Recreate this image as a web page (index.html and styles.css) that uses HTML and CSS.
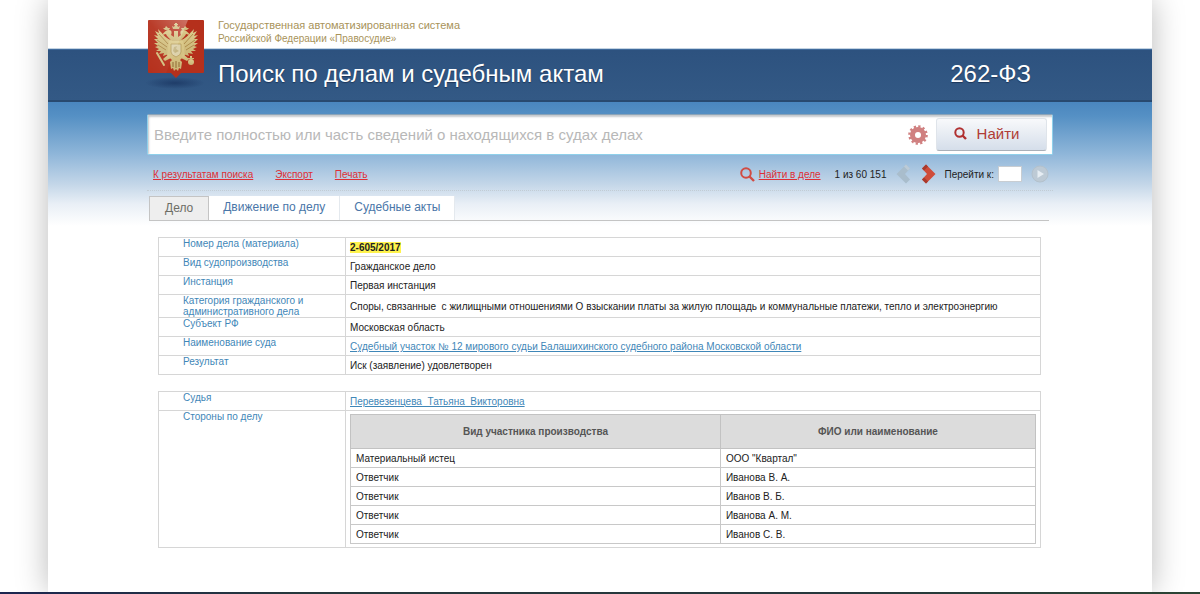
FILE: index.html
```html
<!DOCTYPE html>
<html lang="ru">
<head>
    <meta charset="UTF-8">
    <meta name="viewport" content="width=device-width, initial-scale=1.0">
    <title>ГАС «Правосудие»</title>
    <link rel="stylesheet" href="styles.css">
</head>
<body>
    <div class="page">
        <header class="header">
            <div class="top">
                <div class="inner top-inner">
                    <svg class="emblem" viewBox="0 0 64 72" width="64" height="72" aria-hidden="true">
                        <defs>
                            <linearGradient id="gold" x1="0" y1="0" x2="0" y2="1">
                                <stop offset="0" stop-color="#dccb8c"/>
                                <stop offset="1" stop-color="#cbb576"/>
                            </linearGradient>
                            <linearGradient id="shine" x1="1" y1="0" x2="0" y2="1">
                                <stop offset="0" stop-color="#fff" stop-opacity="0.8"/>
                                <stop offset="0.5" stop-color="#fff" stop-opacity="0.15"/>
                                <stop offset="1" stop-color="#fff" stop-opacity="0"/>
                            </linearGradient>
                            <radialGradient id="shadow">
                                <stop offset="0" stop-color="#1d3a66" stop-opacity="0.9"/>
                                <stop offset="1" stop-color="#1d3a66" stop-opacity="0"/>
                            </radialGradient>
                        </defs>
                        <ellipse cx="31" cy="63" rx="30" ry="6" fill="url(#shadow)"/>
                        <path d="M5 0H59Q60 0 60 1V52Q60 53 59 53H37L32 58L27 53H5Q4 53 4 52V1Q4 0 5 0Z" fill="#b5301c"/>
                        <g fill="url(#gold)">
                            <!-- crowns -->
                            <path d="M29 9L28 6L30 7L31 5H30V4H31V3H33V4H34V5H33L34 7L36 6L35 9Z"/>
                            <path d="M21 10L19 8L21 8L22 6L24 8L26 8L25 10ZM38 10L37 8L40 8L41 6L43 8L45 8L43 10Z"/>
                            <!-- heads -->
                            <path d="M25 10C22 10 20 12 18 15L22 14C23 17 26 18 28 22L36 22C38 18 41 17 42 14L46 15C44 12 42 10 39 10C36 10 36 13 37 15L34 17V11H30V17L27 15C28 13 28 10 25 10Z"/>
                            <!-- wings -->
                            <path d="M28 20C23 20 19 14 14 9L15 13L11 11L14 16L10 15L14 19L10 19L14 23L10 23L14 26L11 27L15 29L12 31L17 31L15 34L20 33L19 36L25 34Z"/>
                            <path d="M36 20C41 20 45 14 50 9L49 13L53 11L50 16L54 15L50 19L54 19L50 23L54 23L50 26L53 27L49 29L52 31L47 31L49 34L44 33L45 36L39 34Z"/>
                            <!-- body, legs and tail -->
                            <path d="M25 21H39L41 35L36 40L38 42L37 49L35 48L34 51L32 49L30 51L29 48L27 49L26 42L28 40L23 35Z"/>
                            <path d="M25 34L19 39L21 41L27 38ZM39 34L45 39L43 41L37 38Z"/>
                            <circle cx="47" cy="42" r="3"/>
                            <path d="M46 36H48V38H50V39H44V38H46Z"/>
                        </g>
                        <path d="M13 33L20 45" stroke="#d4c180" stroke-width="2" stroke-linecap="round"/>
                        <path d="M15 14L24 24M13 20L23 27M14 25L22 30M49 14L40 24M51 20L41 27M50 25L42 30" stroke="#a5803f" stroke-width="0.8"/>
                        <path d="M27 24H37V32Q37 35 32 37Q27 35 27 32Z" fill="#ddd2ac" stroke="#b59c5c" stroke-width="0.8"/>
                        <path d="M30 27L33 26L32 29L35 31L31 33L29 31Z" fill="#c4b583"/>
                        <path d="M29 42V47M32 41V48M35 42V47" stroke="#8f6a35" stroke-width="1"/>
                        <path d="M5 0H44L22 53H5Q4 53 4 52V1Q4 0 5 0Z" fill="url(#shine)" opacity="0.4"/>
                    </svg>
                    <div class="org">
                        <div class="org-name">Государственная автоматизированная система</div>
                        <div class="org-sub">Российской Федерации «Правосудие»</div>
                    </div>
                </div>
            </div>
            <div class="title-bar">
                <div class="inner title-inner">
                    <h1 class="title">Поиск по делам и судебным актам</h1>
                    <div class="law">262-ФЗ</div>
                </div>
            </div>
        </header>

        <main class="main">
            <div class="inner">
                <form class="search">
                    <input class="search-input" type="text" aria-label="Поиск" placeholder="Введите полностью или часть сведений о находящихся в судах делах">
                    <button class="icon-btn" type="button" aria-label="Настройки">
                        <svg viewBox="0 0 20 20" width="20" height="20">
                            <circle cx="10" cy="10" r="5.5" fill="none" stroke="#d08080" stroke-width="5"/>
                            <circle cx="10" cy="10" r="8.6" fill="none" stroke="#d08080" stroke-width="2.4" stroke-dasharray="2.25 2.25"/>
                        </svg>
                    </button>
                    <button class="search-btn" type="submit">
                        <svg viewBox="0 0 13 13" width="13" height="13">
                            <circle cx="5.5" cy="5.5" r="4.2" fill="none" stroke="#b03030" stroke-width="2"/>
                            <path d="M8.5 8.5L12 12" stroke="#b03030" stroke-width="2.4"/>
                        </svg>
                        <span>Найти</span>
                    </button>
                </form>

                <div class="toolbar">
                    <div class="links">
                        <a href="#">К результатам поиска</a>
                        <a href="#">Экспорт</a>
                        <a href="#">Печать</a>
                    </div>
                    <div class="pager">
                        <a class="find" href="#">
                            <svg viewBox="0 0 15 15" width="15" height="15">
                                <circle cx="6" cy="6" r="4.8" fill="none" stroke="#d14b42" stroke-width="2"/>
                                <path d="M9.5 9.5L14 14" stroke="#d14b42" stroke-width="2.4"/>
                            </svg>
                            <span>Найти в деле</span>
                        </a>
                        <span class="count">1 из 60 151</span>
                        <button class="icon-btn" type="button" aria-label="Назад">
                            <svg viewBox="0 0 15 20" width="15" height="20">
                                <path d="M10 0.5L14 4.5L9 10L14 15.5L10 19.5L0.5 10Z" fill="#a9bdcc"/>
                                <path d="M10 0.5L14 4.5L12 6.5L8 2.5Z" fill="#bccbd7"/>
                            </svg>
                        </button>
                        <button class="icon-btn next" type="button" aria-label="Вперед">
                            <svg viewBox="0 0 15 20" width="15" height="20">
                                <path d="M5 0.5L14.5 10L5 19.5L1 15.5L6 10L1 4.5Z" fill="#cf4c3a"/>
                                <path d="M5 0.5L7 2.5L3 6.5L1 4.5ZM1 15.5L3 13.5L7 17.5L5 19.5Z" fill="#a83a2c"/>
                            </svg>
                        </button>
                        <label class="goto-label" for="goto">Перейти к:</label>
                        <input class="goto" id="goto" type="text">
                        <button class="icon-btn" type="button" aria-label="Перейти">
                            <svg viewBox="0 0 18 18" width="18" height="18">
                                <circle cx="9" cy="9" r="8" fill="#bdcad5" stroke="#b3c1cc" stroke-width="1"/>
                                <path d="M6.5 5L13 9L6.5 13Z" fill="#e6edf3"/>
                            </svg>
                        </button>
                    </div>
                </div>

                <nav class="tabs">
                    <a class="tab active" href="#">Дело</a>
                    <a class="tab" href="#">Движение по делу</a>
                    <a class="tab" href="#">Судебные акты</a>
                </nav>

                <div class="content">
                    <table class="card">
                        <tr>
                            <th scope="row">Номер дела (материала)</th>
                            <td><mark>2-605/2017</mark></td>
                        </tr>
                        <tr>
                            <th scope="row">Вид судопроизводства</th>
                            <td>Гражданское дело</td>
                        </tr>
                        <tr>
                            <th scope="row">Инстанция</th>
                            <td>Первая инстанция</td>
                        </tr>
                        <tr>
                            <th scope="row">Категория гражданского и административного дела</th>
                            <td>Споры, связанные&nbsp; с жилищными отношениями О взыскании платы за жилую площадь и коммунальные платежи, тепло и электроэнергию</td>
                        </tr>
                        <tr>
                            <th scope="row">Субъект РФ</th>
                            <td>Московская область</td>
                        </tr>
                        <tr>
                            <th scope="row">Наименование суда</th>
                            <td><a href="#">Судебный участок № 12 мирового судьи Балашихинского судебного района Московской области</a></td>
                        </tr>
                        <tr>
                            <th scope="row">Результат</th>
                            <td>Иск (заявление) удовлетворен</td>
                        </tr>
                    </table>

                    <table class="card">
                        <tr>
                            <th scope="row">Судья</th>
                            <td><a href="#">Перевезенцева&nbsp; Татьяна&nbsp; Викторовна</a></td>
                        </tr>
                        <tr>
                            <th scope="row">Стороны по делу</th>
                            <td class="nested">
                                <table class="parties">
                                    <thead>
                                        <tr>
                                            <th class="kind">Вид участника производства</th>
                                            <th>ФИО или наименование</th>
                                        </tr>
                                    </thead>
                                    <tbody>
                                        <tr><td>Материальный истец</td><td>ООО "Квартал"</td></tr>
                                        <tr><td>Ответчик</td><td>Иванова В. А.</td></tr>
                                        <tr><td>Ответчик</td><td>Иванов В. Б.</td></tr>
                                        <tr><td>Ответчик</td><td>Иванова А. М.</td></tr>
                                        <tr><td>Ответчик</td><td>Иванов С. В.</td></tr>
                                    </tbody>
                                </table>
                            </td>
                        </tr>
                    </table>
                </div>
            </div>
        </main>
    </div>
    <div class="bottom-line"></div>
</body>
</html>
```
FILE: styles.css
```css
* {
    box-sizing: border-box;
}

body {
    margin: 0;
    min-height: 100vh;
    display: flex;
    flex-direction: column;
    background: #fff;
    font-family: "Liberation Sans", Arial, sans-serif;
    font-size: 10px;
    color: #222;
    overflow-x: hidden;
}

.page {
    flex: 1;
    width: 92%;
    margin: 0 auto;
    background: #fff;
    box-shadow: 0 0 30px rgba(0, 0, 0, 0.28);
}

.inner {
    margin: 0 99px;
}

/* header */
.top {
    height: 49px;
    border-bottom: 1px solid #c3d3e2;
}

.top-inner {
    position: relative;
    padding: 18px 0 0 71px;
}

.emblem {
    position: absolute;
    top: 20px;
    left: -3px;
}

.org {
    color: #a8935a;
}

.org-name {
    font-size: 11px;
    line-height: 15px;
}

.org-sub {
    font-size: 10px;
    line-height: 12px;
}

.title-bar {
    background: linear-gradient(#2d527f, #335985);
    border-top: 1px solid #3f6a9c;
    border-bottom: 2px solid #28496f;
}

.title-inner {
    display: flex;
    justify-content: space-between;
    align-items: center;
    height: 50px;
    padding: 0 22px 2px 71px;
    color: #fff;
    font-size: 24px;
    text-shadow: 0 1px 1px #1c365a;
}

.title {
    margin: 0;
    font-size: 24px;
    font-weight: normal;
}

.main {
    padding: 12px 0 40px;
    background: linear-gradient(#4a86be 0, #5590c4 14px, #8fb6d9 52px, #c3d6e8 82px, #e9eff6 102px, #fff 124px);
}

/* search */
.search {
    display: flex;
    align-items: center;
    gap: 8px;
    height: 41px;
    padding: 0 5px 0 6px;
    background: #fff;
    border: 1px solid #8fd0ea;
    border-top-color: #8aa3b8;
    border-radius: 2px;
    box-shadow: inset 1px 2px 2px #c5c9cd;
}

.search-input {
    flex: 1;
    min-width: 0;
    padding: 0;
    border: 0;
    outline: 0;
    background: transparent;
    font-family: inherit;
    font-size: 15px;
}

.search-input::placeholder {
    color: #b8b8b8;
    opacity: 1;
}

.icon-btn {
    display: flex;
    padding: 0;
    border: 0;
    background: none;
    cursor: pointer;
}

.search-btn {
    display: flex;
    align-items: center;
    justify-content: center;
    gap: 10px;
    width: 111px;
    height: 33px;
    padding: 0 10px 2px 0;
    border: 1px solid #dfe4ea;
    border-bottom-color: #a9b0b8;
    border-radius: 3px;
    background: linear-gradient(#f8f9fb, #d5deea);
    color: #b03c35;
    font-family: inherit;
    font-size: 15px;
    cursor: pointer;
}

/* toolbar */
.toolbar {
    display: flex;
    justify-content: space-between;
    align-items: center;
    height: 36px;
    padding: 3px 4px 0 6px;
    border-bottom: 1px dotted #c2ccd4;
}

.toolbar a {
    color: #de2f36;
}

.links {
    display: flex;
    gap: 22px;
}

.pager {
    display: flex;
    align-items: center;
}

.find {
    display: flex;
    align-items: center;
    gap: 4px;
    text-decoration: none;
}

.find span {
    text-decoration: underline;
}

.count {
    margin: 0 10px 0 14px;
}

.next {
    margin: 0 8px 0 10px;
}

.goto {
    width: 24px;
    height: 16px;
    margin: 0 9px 0 4px;
    padding: 0 2px;
    border: 1px solid #c8cdd2;
    background: #fff;
    font-size: 10px;
}

/* tabs */
.tabs {
    display: flex;
    margin: 5px 4px 0 2px;
    border-bottom: 1px solid #c4c4c4;
}

.tab {
    padding: 0 14px;
    border-right: 1px solid #e4e9ee;
    background: #fff;
    color: #4a76a8;
    font-size: 12px;
    line-height: 23px;
    text-decoration: none;
}

.tab.active {
    padding: 0 15px;
    border: 1px solid #c4c4c4;
    border-bottom: 0;
    background: #eee;
    color: #6d6d65;
}

/* case card */
.content {
    display: flex;
    flex-direction: column;
    gap: 16px;
    padding: 16px 12px 0 11px;
}

.card,
.parties {
    width: 100%;
    border-collapse: collapse;
    table-layout: fixed;
}

.card th,
.card td {
    height: 19px;
    border: 1px solid #d6d6d6;
    line-height: 11px;
}

.card > tbody > tr > th {
    width: 187px;
    padding: 0 24px 0 24px;
    vertical-align: top;
    text-align: left;
    font-weight: normal;
    color: #3f87b8;
}

.card td {
    padding: 1px 4px 0;
}

.card td a {
    color: #3f87b8;
}

.card mark {
    background: #fff34d;
    color: #222;
    font-weight: bold;
}

.card .nested {
    padding: 3px 4px;
}

.card .parties th {
    height: 34px;
    border-color: #c2c2c2;
    background: #dcdcdc;
    color: #555;
}

.parties .kind {
    width: 54%;
}

.card .parties td {
    padding: 0 5px;
    border-color: #c8c8c8;
}

.bottom-line {
    position: relative;
    height: 2px;
    background: linear-gradient(90deg, #1b2550, #26383c 25%, #26383c 70%, #2c4434);
}
```
